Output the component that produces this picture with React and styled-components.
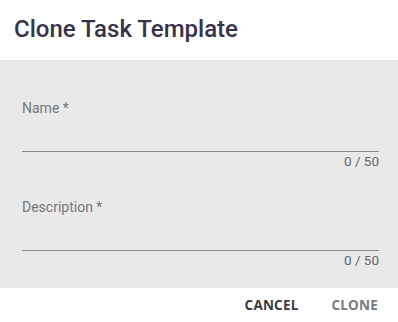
import React from "react";
import styled, { createGlobalStyle } from "styled-components";

const Global = createGlobalStyle`
  html, body { margin: 0; padding: 0; background: #ffffff; }
  body { font-family: Roboto, "Noto Sans", sans-serif; }
`;

const Dialog = styled.div`
  width: 398px;
  height: 322px;
  display: flex;
  flex-direction: column;
  background: #fff;
`;

const Title = styled.h2`
  margin: 0;
  height: 60px;
  box-sizing: border-box;
  padding: 15px 0 0 14px;
  font-family: Roboto, sans-serif;
  font-weight: 500;
  font-size: 24px;
  line-height: 28px;
  color: #36334a;
`;

const Body = styled.div`
  background: #e9e9e9;
  height: 228px;
  box-sizing: border-box;
  padding: 38px 19px 0 22px;
  display: flex;
  flex-direction: column;
  gap: 28px;
`;

const Field = styled.div`
  display: flex;
  flex-direction: column;
`;

const Label = styled.label`
  font-size: 14px;
  line-height: 20px;
  color: #77767e;
`;

const Input = styled.input`
  height: 34px;
  box-sizing: border-box;
  border: none;
  border-bottom: 1px solid #8b8a93;
  background: transparent;
  outline: none;
  padding: 0;
  font-family: Roboto, sans-serif;
  font-size: 14px;
`;

const Counter = styled.div`
  text-align: right;
  font-size: 13.5px;
  line-height: 16px;
  margin-top: 1px;
  color: #66656d;
`;

const Actions = styled.div`
  flex: 1;
  display: flex;
  justify-content: flex-end;
  align-items: center;
  gap: 33px;
  padding-right: 20px;
`;

const Button = styled.button`
  border: none;
  background: transparent;
  padding: 0;
  font-family: "Open Sans", sans-serif;
  font-weight: 700;
  font-size: 13.5px;
  letter-spacing: 0.2px;
  color: ${(p) => (p.disabled ? "#7b7a84" : "#3a3946")};
  cursor: pointer;
`;

export default function App() {
  return (
    <>
      <Global />
      <Dialog>
        <Title>Clone Task Template</Title>
        <Body>
          <Field>
            <Label>Name *</Label>
            <Input />
            <Counter>0 / 50</Counter>
          </Field>
          <Field>
            <Label>Description *</Label>
            <Input />
            <Counter>0 / 50</Counter>
          </Field>
        </Body>
        <Actions>
          <Button>CANCEL</Button>
          <Button disabled>CLONE</Button>
        </Actions>
      </Dialog>
    </>
  );
}
